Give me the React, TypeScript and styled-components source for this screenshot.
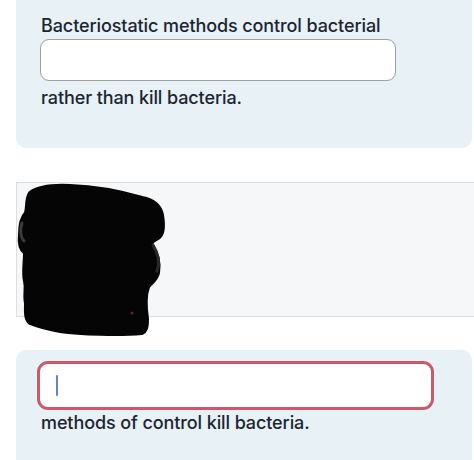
import React from "react";
import styled, { createGlobalStyle } from "styled-components";

const GlobalStyle = createGlobalStyle`
  html, body {
    margin: 0;
    padding: 0;
    background: #ffffff;
    overflow: hidden;
  }
  body {
    font-family: Inter, "Liberation Sans", Arial, sans-serif;
    color: #1b2531;
  }
`;

const Page = styled.div`
  display: flex;
  flex-direction: column;
  padding-left: 16px;
  width: 458px;
`;

const QuestionCard = styled.div<{ $top?: boolean }>`
  background: #e8f1f5;
  margin-right: 2px;
  border-radius: ${({ $top }) => ($top ? "0 0 10px 10px" : "10px 10px 0 0")};
  padding: ${({ $top }) => ($top ? "14px 24px 38px" : "11px 24px 40px")};
  display: flex;
  flex-direction: column;
  align-items: flex-start;
`;

const Line = styled.p`
  margin: 0;
  font-size: 18px;
  font-weight: 500;
  line-height: 24px;
  letter-spacing: -0.1px;
  padding-left: 1px;
`;

const Field = styled.div<{ $focused?: boolean; $width: number }>`
  box-sizing: border-box;
  width: ${({ $width }) => $width}px;
  height: ${({ $focused }) => ($focused ? 49 : 42)}px;
  background: #ffffff;
  border: ${({ $focused }) =>
    $focused ? "3px solid #c9596b" : "1px solid #9d9fa2"};
  border-radius: ${({ $focused }) => ($focused ? 11 : 9)}px;
  margin: ${({ $focused }) => ($focused ? "0 0 1px -3px" : "1px 0 5px")};
  display: flex;
  align-items: center;
  padding-left: 16px;
`;

const Caret = styled.span`
  display: block;
  width: 2px;
  height: 21px;
  border-radius: 1px;
  background: #5e87c6;
`;

const ImageCard = styled.div`
  position: relative;
  height: 135px;
  margin: 34px 0 33px;
  box-sizing: border-box;
  background: #f6f7f9;
  border: 1px solid #dcdee1;
  border-right: none;
`;

const Scribble = styled.svg`
  position: absolute;
  left: 3px;
  top: 2px;
  overflow: visible;
`;

function Redaction() {
  return (
    <Scribble width="145" height="150" viewBox="0 0 145 150">
      <path
        d="M10 8 C18 2 30 0 50 1 C80 2 105 8 122 13 C132 15 140 20 142 30 C144 42 143 50 138 53 C134 55 131 57 131 60 C136 66 140 76 138 88 C136 96 130 98 128 102 C125 110 125 120 127 134 C127 142 126 146 122 148 C100 150 60 149 40 146 C28 144 20 142 10 138 C5 134 6 126 6 118 C4 110 7 104 5 96 C3 88 5 78 5 68 C0 64 -1 58 0 50 C0 40 2 32 6 28 C8 20 6 14 10 8 Z"
        fill="#050505"
        stroke="#050505"
        strokeWidth="4"
        strokeLinejoin="round"
      />
      <path
        d="M2 38 C0 44 0 52 4 56"
        fill="none"
        stroke="#3a3a3a"
        strokeWidth="3"
        strokeLinecap="round"
      />
      <path
        d="M133 60 C138 68 140 78 137 86"
        fill="none"
        stroke="#2a2a2a"
        strokeWidth="3"
        strokeLinecap="round"
      />
      <circle cx="112" cy="128" r="1.5" fill="#7a1a1a" />
    </Scribble>
  );
}

export default function App() {
  return (
    <>
      <GlobalStyle />
      <Page>
        <QuestionCard $top>
          <Line>Bacteriostatic methods control bacterial</Line>
          <Field $width={356} />
          <Line>rather than kill bacteria.</Line>
        </QuestionCard>

        <ImageCard>
          <Redaction />
        </ImageCard>

        <QuestionCard>
          <Field $focused $width={397}>
            <Caret />
          </Field>
          <Line>methods of control kill bacteria.</Line>
        </QuestionCard>
      </Page>
    </>
  );
}
